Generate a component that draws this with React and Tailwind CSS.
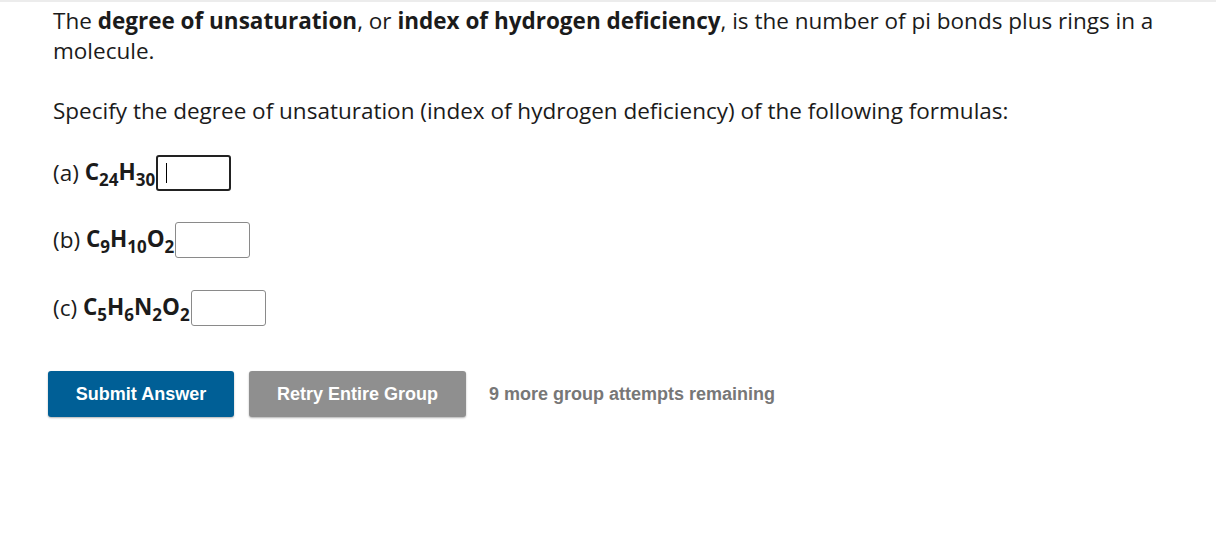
import React from "react";

const Sub = ({ children }) => (
  <span className="text-[17px] relative top-[6px]">{children}</span>
);

function Row({ label, formula, focused, className }) {
  return (
    <div className={"flex items-center h-[36px] " + (className || "")}>
      <span>{label}&nbsp;</span>
      <span className="font-bold whitespace-nowrap">{formula}</span>
      <div
        className={
          "w-[75px] h-[36px] rounded-[3px] bg-white flex items-center ml-[1px] " +
          (focused ? "border-2 border-[#222]" : "border border-[#8a8a8a]")
        }
      >
        {focused && <div className="w-px h-[20px] bg-black ml-[8px]" />}
      </div>
    </div>
  );
}

export default function App() {
  return (
    <div className="w-[1216px] h-[535px] bg-white overflow-hidden">
      <div className="h-[2px] bg-[#ececec]" />
      <div
        className="pl-[53px] pt-[4px] text-[#1b1b1b] text-[22.5px] leading-[30px]"
        style={{ fontFamily: '"Open Sans", "Noto Sans", sans-serif' }}
      >
        <p className="w-[1110px]">
          The <b>degree of unsaturation</b>, or <b>index of hydrogen deficiency</b>, is the number of pi bonds plus rings in a molecule.
        </p>
        <p className="mt-[30px]">
          Specify the degree of unsaturation (index of hydrogen deficiency) of the following formulas:
        </p>
        <Row
          className="mt-[29px]"
          label="(a)"
          focused
          formula={<>C<Sub>24</Sub>H<Sub>30</Sub></>}
        />
        <Row
          className="mt-[31px]"
          label="(b)"
          formula={<>C<Sub>9</Sub>H<Sub>10</Sub>O<Sub>2</Sub></>}
        />
        <Row
          className="mt-[32px]"
          label="(c)"
          formula={<>C<Sub>5</Sub>H<Sub>6</Sub>N<Sub>2</Sub>O<Sub>2</Sub></>}
        />
      </div>
      <div
        className="flex items-center mt-[45px] pl-[48px] text-[18px] font-bold"
        style={{ fontFamily: '"Liberation Sans", Arial, sans-serif' }}
      >
        <button className="h-[46px] w-[186px] rounded-[3px] bg-[#005f96] text-white shadow-[0_1px_2px_rgba(0,0,0,0.3)]">
          Submit Answer
        </button>
        <button className="h-[46px] w-[217px] ml-[15px] rounded-[3px] bg-[#8f8f8f] text-white shadow-[0_1px_2px_rgba(0,0,0,0.3)]">
          Retry Entire Group
        </button>
        <span className="ml-[23px] text-[#777777]">9 more group attempts remaining</span>
      </div>
    </div>
  );
}
